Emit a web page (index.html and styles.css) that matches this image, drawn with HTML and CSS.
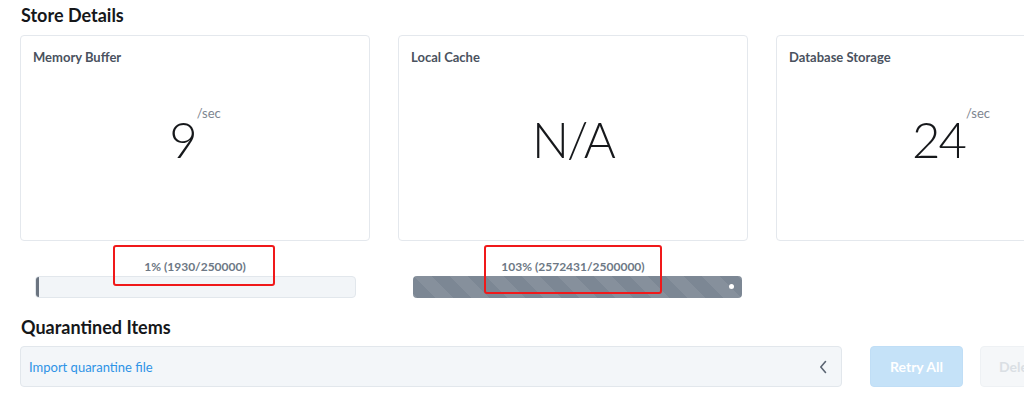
FILE: index.html
```html
<!DOCTYPE html>
<html>
<head>
<meta charset="utf-8">
<link rel="stylesheet" href="styles.css">
</head>
<body>
<div class="page">
  <h2 class="section-title">Store Details</h2>
  <div class="cards">
    <div class="card">
      <div class="card-title">Memory Buffer</div>
      <div class="card-value"><span class="num">9</span><span class="unit">/sec</span></div>
    </div>
    <div class="card">
      <div class="card-title">Local Cache</div>
      <div class="card-value"><span class="num">N/A</span></div>
    </div>
    <div class="card">
      <div class="card-title">Database Storage</div>
      <div class="card-value"><span class="num">24</span><span class="unit">/sec</span></div>
    </div>
  </div>
  <div class="usage">
    <div class="usage-col">
      <div class="usage-label">1% (1930/250000)<span class="mark mark-1"></span></div>
      <div class="bar bar-1"><div class="fill fill-low" style="width:3px"></div></div>
    </div>
    <div class="usage-col">
      <div class="usage-label">103% (2572431/2500000)<span class="mark mark-2"></span></div>
      <div class="bar bar-2"><div class="fill fill-over" style="width:100%"><span class="dot"></span></div></div>
    </div>
  </div>
  <h2 class="section-title q-title">Quarantined Items</h2>
  <div class="q-row">
    <div class="q-input">
      <span class="q-link">Import quarantine file</span>
      <svg class="chev" width="8" height="14" viewBox="0 0 8 14"><path d="M6.5 1.5 L1.8 7 L6.5 12.5" fill="none" stroke="#5b6573" stroke-width="1.6" stroke-linecap="round" stroke-linejoin="round"/></svg>
    </div>
    <button class="btn btn-retry">Retry All</button>
    <div class="btn-clip"><button class="btn btn-delete">Delete All</button></div>
  </div>
</div>
</body>
</html>
```
FILE: styles.css
```css
html, body {
  margin: 0;
  padding: 0;
  background: #ffffff;
  overflow: hidden;
}
body {
  font-family: Lato, "Open Sans", "Liberation Sans", sans-serif;
  color: #1c1e21;
  width: 1024px;
  height: 413px;
}
.page {
  padding: 3px 0 0 20px;
  width: 1004px;
  overflow: hidden;
}
.section-title {
  margin: 0;
  font-size: 18px;
  font-weight: 700;
  line-height: 24px;
  padding-left: 1px;
  color: #15171a;
}
.cards {
  display: grid;
  grid-template-columns: 350px 350px 350px;
  column-gap: 28px;
  margin-top: 8px;
}
.card {
  height: 206px;
  box-sizing: border-box;
  border: 1px solid #e4e8ed;
  border-radius: 4px;
  padding: 13px 12px 0 12px;
  display: flex;
  flex-direction: column;
}
.card-title {
  font-size: 13px;
  font-weight: 700;
  color: #4a525e;
  line-height: 16px;
}
.card-value {
  display: flex;
  justify-content: center;
  align-items: flex-start;
  margin-top: 40px;
}
.num {
  font-size: 49px;
  font-weight: 300;
  line-height: 60px;
  letter-spacing: -2px;
  color: #16181b;
  margin-top: 4px;
}
.unit {
  font-size: 13px;
  color: #7d8590;
  line-height: 16px;
  margin-left: 1px;
}
.usage {
  display: grid;
  grid-template-columns: 350px 350px;
  column-gap: 28px;
  margin-top: 19px;
}
.usage-col {
  display: flex;
  flex-direction: column;
}
.usage-label {
  position: relative;
  text-align: center;
  font-size: 12px;
  font-weight: 700;
  color: #6d7885;
  line-height: 14px;
}
.mark {
  position: absolute;
  z-index: 2;
  border: 2px solid #f0191a;
  border-radius: 3px;
  box-sizing: border-box;
}
.mark-1 {
  left: 93px;
  top: -15px;
  width: 162px;
  height: 41px;
}
.mark-2 {
  left: 86px;
  top: -15px;
  width: 178px;
  height: 49px;
}
.bar {
  margin-top: 2px;
  height: 22px;
  box-sizing: border-box;
  border-radius: 4px;
  overflow: hidden;
}
.bar-1 {
  margin-left: 15px;
  width: 321px;
  background: #f2f5f8;
  border: 1px solid #e2e7ec;
}
.bar-2 {
  margin-left: 15px;
  width: 329px;
  background: #f2f5f8;
}
.fill {
  height: 100%;
  position: relative;
}
.fill-low {
  background: #6b7480;
}
.fill-over {
  background-color: #7c8794;
  background-image: linear-gradient(45deg,
    rgba(255,255,255,0.08) 25%, transparent 25%,
    transparent 50%, rgba(255,255,255,0.08) 50%,
    rgba(255,255,255,0.08) 75%, transparent 75%, transparent);
  background-size: 36px 36px;
}
.dot {
  position: absolute;
  right: 8px;
  top: 8px;
  width: 5px;
  height: 5px;
  border-radius: 50%;
  background: #ffffff;
}
.q-title {
  margin-top: 17px;
}
.q-row {
  display: flex;
  align-items: stretch;
  margin-top: 7px;
  height: 41px;
}
.q-input {
  width: 822px;
  flex-shrink: 0;
  box-sizing: border-box;
  background: #f3f6f9;
  border: 1px solid #e2e7ec;
  border-radius: 4px;
  display: flex;
  align-items: center;
  justify-content: space-between;
  padding: 0 14px 0 8px;
}
.q-link {
  font-size: 13px;
  color: #2e93e6;
}
.chev {
  display: block;
}
.btn {
  font-family: inherit;
  font-size: 14px;
  font-weight: 700;
  border-radius: 4px;
  border: 1px solid transparent;
  height: 41px;
  box-sizing: border-box;
  padding: 0 18px;
  flex-shrink: 0;
}
.btn-retry {
  margin-left: 28px;
  width: 93px;
  background: #c5e2f8;
  color: #ffffff;
  border-color: #c0def6;
}
.btn-clip {
  margin-left: 17px;
  flex: 1;
  overflow: hidden;
}
.btn-delete {
  width: 100px;
  background: #f5f7f9;
  color: #dadfe4;
  border-color: #eef1f4;
  text-align: left;
}
```
